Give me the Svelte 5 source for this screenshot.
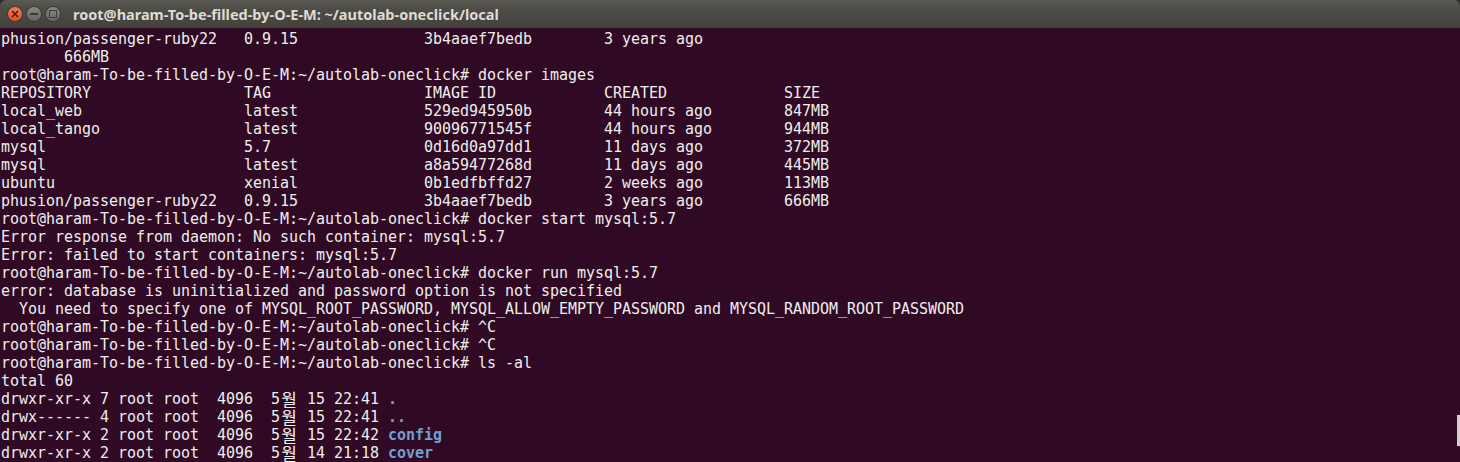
<script>
    const prompt = "root@haram-To-be-filled-by-O-E-M:~/autolab-oneclick# ";
    const rows = [
        "phusion/passenger-ruby22   0.9.15              3b4aaef7bedb        3 years ago",
        "       666MB",
        prompt + "docker images",
        "REPOSITORY                 TAG                 IMAGE ID            CREATED             SIZE",
        "local_web                  latest              529ed945950b        44 hours ago        847MB",
        "local_tango                latest              90096771545f        44 hours ago        944MB",
        "mysql                      5.7                 0d16d0a97dd1        11 days ago         372MB",
        "mysql                      latest              a8a59477268d        11 days ago         445MB",
        "ubuntu                     xenial              0b1edfbffd27        2 weeks ago         113MB",
        "phusion/passenger-ruby22   0.9.15              3b4aaef7bedb        3 years ago         666MB",
        prompt + "docker start mysql:5.7",
        "Error response from daemon: No such container: mysql:5.7",
        "Error: failed to start containers: mysql:5.7",
        prompt + "docker run mysql:5.7",
        "error: database is uninitialized and password option is not specified",
        "  You need to specify one of MYSQL_ROOT_PASSWORD, MYSQL_ALLOW_EMPTY_PASSWORD and MYSQL_RANDOM_ROOT_PASSWORD",
        prompt + "^C",
        prompt + "^C",
        prompt + "ls -al",
        "total 60"
    ];
    const files = [
        { head: "drwxr-xr-x 7 root root  4096", day: "15 22:41", name: "." },
        { head: "drwx------ 4 root root  4096", day: "15 22:41", name: ".." },
        { head: "drwxr-xr-x 2 root root  4096", day: "15 22:42", name: "config" },
        { head: "drwxr-xr-x 2 root root  4096", day: "14 21:18", name: "cover" }
    ];
</script>

<div class="window">
    <header class="titlebar">
        <div class="buttons">
            <span class="btn close">
                <svg viewBox="0 0 8 8" width="8" height="8"><path d="M1 1 7 7M7 1 1 7" stroke="#4a1a08" stroke-width="1.6" /></svg>
            </span>
            <span class="btn"><i class="minus"></i></span>
            <span class="btn"><i class="square"></i></span>
        </div>
        <div class="title">root@haram-To-be-filled-by-O-E-M: ~/autolab-oneclick/local</div>
    </header>
    <div class="terminal">
        {#each rows as row}
            <div class="line">{row}</div>
        {/each}
        {#each files as f}
            <div class="line">{f.head}  5<span class="wide">월</span> {f.day} <span class="dir">{f.name}</span></div>
        {/each}
        <div class="scrollbar"></div>
    </div>
</div>

<style>
    :global(body) {
        margin: 0;
        background: #300a24;
    }
    .window {
        width: 1460px;
        height: 462px;
        overflow: hidden;
        display: flex;
        flex-direction: column;
        background: #2b2a27;
    }
    .titlebar {
        height: 28px;
        flex: none;
        display: flex;
        align-items: center;
        border-radius: 6px 6px 0 0;
        background: linear-gradient(#5a5952, #4e4d47 30%, #42413c);
    }
    .buttons {
        display: flex;
        align-items: center;
        gap: 5px;
        padding-left: 8px;
        width: 65px;
    }
    .btn {
        width: 14px;
        height: 14px;
        border-radius: 50%;
        display: flex;
        align-items: center;
        justify-content: center;
        background: linear-gradient(#8a8981, #65645d);
        box-shadow: 0 0 0 1px #3c3b37;
    }
    .close {
        background: linear-gradient(#f47a4c, #e2501f);
    }
    .minus {
        width: 8px;
        height: 2px;
        background: #3c3b37;
    }
    .square {
        width: 6px;
        height: 6px;
        border: 1px solid #3c3b37;
    }
    .title {
        font-family: "Noto Sans", "Open Sans", sans-serif;
        font-weight: 700;
        font-size: 14.5px;
        color: #dfdbd2;
        white-space: nowrap;
    }
    .terminal {
        position: relative;
        flex: 1;
        padding-top: 2px;
        background: #300a24;
        color: #eeeeec;
        font-family: "DejaVu Sans Mono", "Liberation Mono", monospace;
        font-size: 15px;
        letter-spacing: -0.03px;
    }
    .line {
        height: 18px;
        line-height: 18px;
        padding-left: 1px;
        white-space: pre;
    }
    .wide {
        display: inline-block;
        width: 18px;
        font-family: "Noto Sans CJK KR", sans-serif;
        font-size: 17px;
        line-height: 18px;
        vertical-align: top;
        text-align: center;
    }
    .dir {
        color: #729fcf;
        font-weight: 700;
    }
    .scrollbar {
        position: absolute;
        right: 0;
        top: 387px;
        width: 3px;
        height: 31px;
        background: #d3d0cb;
    }
</style>
